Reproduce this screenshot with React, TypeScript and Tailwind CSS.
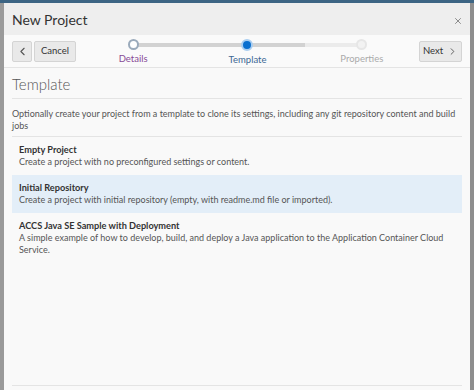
import { ChevronLeft, ChevronRight, X } from "lucide-react";

const steps = [
  { label: "Details", state: "done" },
  { label: "Template", state: "current" },
  { label: "Properties", state: "todo" },
];

const templates = [
  {
    title: "Empty Project",
    desc: "Create a project with no preconfigured settings or content.",
  },
  {
    title: "Initial Repository",
    desc: "Create a project with initial repository (empty, with readme.md file or imported).",
    selected: true,
  },
  {
    title: "ACCS Java SE Sample with Deployment",
    desc: "A simple example of how to develop, build, and deploy a Java application to the Application Container Cloud Service.",
  },
];

function StepDot({ state }: { state: string }) {
  if (state === "current") {
    return <span className="block h-[12px] w-[12px] rounded-full border-2 border-[#a9cdf0] bg-[#0a6fcf]" />;
  }
  if (state === "done") {
    return <span className="block h-[11px] w-[11px] rounded-full border-2 border-[#9aaabb] bg-white" />;
  }
  return <span className="block h-[11px] w-[11px] rounded-full border-2 border-[#e6e6e6] bg-[#f2f2f2]" />;
}

export default function App() {
  return (
    <div
      className="flex h-[390px] w-[474px] flex-col overflow-hidden bg-[#8e8e8e]"
      style={{ fontFamily: 'Lato, "Open Sans", sans-serif' }}
    >
      <div className="h-[3px] shrink-0 bg-[#3d6584]" />
      <div className="flex flex-1">
        <div className="w-[4px] shrink-0 bg-[#9a9a9a]" />
        <div className="flex flex-1 flex-col bg-[#f9f9f9]">
          {/* header */}
          <div className="flex h-[32px] shrink-0 items-center justify-between bg-[#eeeeee] pl-[8px] pr-[7px]">
            <span className="mt-[1px] text-[14px] text-[#333]">New Project</span>
            <X size={10} strokeWidth={2} className="mt-[4px] text-[#777]" />
          </div>

          {/* train */}
          <div className="flex h-[33px] shrink-0 items-start border-b border-[#e4e4e4] bg-[#fafafa] px-[8px] pt-[6px]">
            <button className="flex h-[21px] w-[20px] items-center justify-center rounded-[2px] border border-[#d4d4d4] bg-[#e9e9e9] text-[#555]">
              <ChevronLeft size={13} strokeWidth={2} />
            </button>
            <button className="ml-[2px] h-[21px] w-[42px] rounded-[2px] border border-[#d4d4d4] bg-[#e9e9e9] text-[9.5px] text-[#333]">
              Cancel
            </button>
            <div className="relative flex flex-1 -mt-[6px]">
              <div className="absolute left-[16.66%] top-[8px] h-[4px] w-[66.66%] bg-[#ebebeb]" />
              <div className="absolute left-[16.66%] top-[8px] h-[4px] w-[50%] bg-[#d2d2d2]" />
              {steps.map((s) => (
                <div key={s.label} className="relative flex flex-1 flex-col items-center pt-[4px]">
                  <StepDot state={s.state} />
                  <span
                    className={
                      "mt-[2px] text-[9.5px] " +
                      (s.state === "done"
                        ? "text-[#874a96]"
                        : s.state === "current"
                        ? "text-[#3c6894]"
                        : "text-[#aaaaaa]")
                    }
                  >
                    {s.label}
                  </span>
                </div>
              ))}
            </div>
            <button className="flex h-[21px] w-[43px] items-center justify-center gap-[4px] rounded-[2px] border border-[#d4d4d4] bg-[#e9e9e9] text-[9.5px] text-[#333]">
              Next
              <ChevronRight size={11} strokeWidth={2} className="text-[#555]" />
            </button>
          </div>

          {/* content */}
          <div className="flex flex-1 flex-col px-[8px]">
            <div className="flex h-[31px] items-center border-b border-[#e4e4e4] pt-[3px]">
              <span className="text-[15px] font-light text-[#555]">Template</span>
            </div>
            <p className="border-b border-[#e4e4e4] pb-[4px] pt-[9px] text-[9px] leading-[12px] text-[#555]">
              Optionally create your project from a template to clone its settings, including any git repository content
              and build jobs
            </p>
            <div className="flex flex-col">
              {templates.map((t) => (
                <div
                  key={t.title}
                  className={"px-[7px] pb-[7px] pt-[7px] " + (t.selected ? "bg-[#e3eef8]" : "")}
                >
                  <div className="text-[9.2px] font-bold leading-[12px] text-[#333]">{t.title}</div>
                  <div className="text-[9px] leading-[12px] text-[#555]">{t.desc}</div>
                </div>
              ))}
            </div>
            <div className="flex-1" />
            <div className="mb-[4px] border-b border-[#e4e4e4]" />
          </div>
        </div>
        <div className="w-[4px] shrink-0 bg-[#8e8e8e]" />
      </div>
    </div>
  );
}
